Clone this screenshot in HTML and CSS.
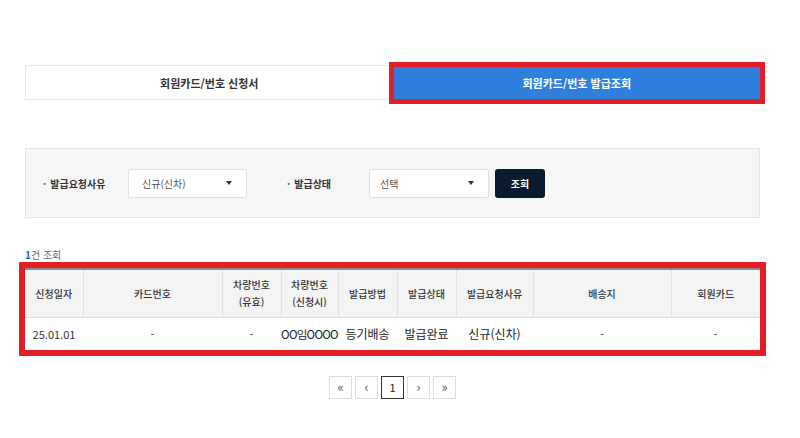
FILE: index.html
```html
<!DOCTYPE html>
<html lang="ko">
<head>
  <meta charset="utf-8">
  <title>회원카드/번호 발급조회</title>
  <link rel="stylesheet" href="styles.css">
</head>
<body>
  <div class="page">
    <div class="tabs">
      <a class="tab">회원카드/번호 신청서</a>
      <a class="tab active">회원카드/번호 발급조회</a>
    </div>

    <div class="search-box">
      <span class="search-label">발급요청사유</span>
      <div class="select select-reason">
        <span>신규(신차)</span>
        <span class="arrow"></span>
      </div>
      <span class="search-label">발급상태</span>
      <div class="select select-status">
        <span>선택</span>
        <span class="arrow"></span>
      </div>
      <button class="search-btn">조회</button>
    </div>

    <div class="result-count"><span class="num">1</span>건 조회</div>

    <div class="table-wrap">
      <table class="result-table">
        <colgroup>
          <col style="width:58px">
          <col style="width:139px">
          <col style="width:59px">
          <col style="width:57px">
          <col style="width:59px">
          <col style="width:59px">
          <col style="width:77px">
          <col style="width:138px">
          <col>
        </colgroup>
        <thead>
          <tr>
            <th>신청일자</th>
            <th>카드번호</th>
            <th>차량번호<br>(유효)</th>
            <th>차량번호<br>(신청시)</th>
            <th>발급방법</th>
            <th>발급상태</th>
            <th>발급요청사유</th>
            <th>배송지</th>
            <th>회원카드</th>
          </tr>
        </thead>
        <tbody>
          <tr>
            <td>25.01.01</td>
            <td>-</td>
            <td>-</td>
            <td class="big plate">OO임OOOO</td>
            <td class="big">등기배송</td>
            <td class="big">발급완료</td>
            <td class="big">신규(신차)</td>
            <td>-</td>
            <td>-</td>
          </tr>
        </tbody>
      </table>
    </div>

    <div class="paging">
      <a class="page-btn arrow-btn">&laquo;</a>
      <a class="page-btn arrow-btn">&lsaquo;</a>
      <a class="page-btn current">1</a>
      <a class="page-btn arrow-btn">&rsaquo;</a>
      <a class="page-btn arrow-btn">&raquo;</a>
    </div>
  </div>
</body>
</html>
```

FILE: styles.css
```css
body {
  margin: 0;
  background: #fff;
  font-family: "Noto Sans CJK KR", "Noto Sans", sans-serif;
  color: #333;
}

.page {
  width: 735px;
  padding: 65px 0 0 25px;
}

/* tabs */
.tabs {
  display: flex;
  align-items: center;
  height: 35px;
}

.tab {
  flex: 1;
  display: flex;
  align-items: center;
  justify-content: center;
  font-size: 11px;
  font-weight: 700;
  color: #333;
  box-sizing: border-box;
}

.tab:first-child {
  height: 35px;
  border: 1px solid #e6e6e6;
  background: #fff;
}

.tab.active {
  height: 32px;
  background: #2f80dd;
  color: #fff;
  outline: 5px solid #e21d25;
}

/* search */
.search-box {
  margin-top: 48px;
  height: 70px;
  box-sizing: border-box;
  border: 1px solid #e4e4e4;
  background: #f6f6f6;
  display: flex;
  align-items: center;
  padding-left: 17px;
}

.search-label {
  font-size: 10px;
  font-weight: 700;
  color: #333;
  width: 85px;
  box-sizing: border-box;
}

.search-label::before {
  content: "·";
  margin-right: 4px;
  color: #555;
}

.select {
  height: 29px;
  box-sizing: border-box;
  background: #fff;
  border: 1px solid #e2e2e2;
  border-radius: 2px;
  display: flex;
  align-items: center;
  justify-content: space-between;
  padding: 0 14px 0 13px;
  font-size: 10px;
  color: #555;
}

.select-reason {
  width: 119px;
  margin-right: 40px;
}

.select-status {
  width: 120px;
  margin-left: -3px;
  margin-right: 6px;
  padding-left: 10px;
}

.arrow {
  width: 0;
  height: 0;
  border-left: 3px solid transparent;
  border-right: 3px solid transparent;
  border-top: 4px solid #333;
}

.search-btn {
  width: 50px;
  height: 29px;
  border: none;
  border-radius: 3px;
  background: #0c1a2f;
  color: #fff;
  font-family: inherit;
  font-size: 10px;
  font-weight: 700;
}

/* result */
.result-count {
  margin-top: 29px;
  font-size: 10px;
  color: #666;
  height: 15px;
  line-height: 15px;
}

.result-count .num {
  color: #2a5db0;
  font-weight: 700;
}

.table-wrap {
  margin: 0 0 0 -6px;
  width: 735px;
  border: 6px solid #e21d25;
  border-radius: 1px;
}

.result-table {
  width: 735px;
  border-collapse: collapse;
  table-layout: fixed;
}

.result-table th {
  height: 48px;
  box-sizing: border-box;
  background: #f4f4f4;
  border-top: 2px solid #8c8c8c;
  border-bottom: 1px solid #dcdcdc;
  border-left: 1px solid #e0e0e0;
  font-size: 10px;
  font-weight: 500;
  line-height: 17px;
  color: #333;
  padding: 0;
}

.result-table th:first-child {
  border-left: none;
}

.result-table td {
  height: 32px;
  text-align: center;
  font-size: 11px;
  color: #333;
  padding: 0;
  white-space: nowrap;
}

.result-table td.big {
  font-size: 12px;
  color: #222;
}

.result-table td.plate {
  font-size: 11.5px;
  letter-spacing: -0.7px;
}

/* paging */
.paging {
  margin-top: 20px;
  display: flex;
  justify-content: center;
  gap: 3px;
}

.page-btn {
  width: 23px;
  height: 23px;
  box-sizing: border-box;
  border: 1px solid #dedede;
  display: flex;
  align-items: center;
  justify-content: center;
  font-size: 11px;
  color: #222;
}

.page-btn.arrow-btn {
  font-size: 13px;
  color: #555;
  padding-bottom: 2px;
}

.page-btn.current {
  border-color: #333;
}
```
